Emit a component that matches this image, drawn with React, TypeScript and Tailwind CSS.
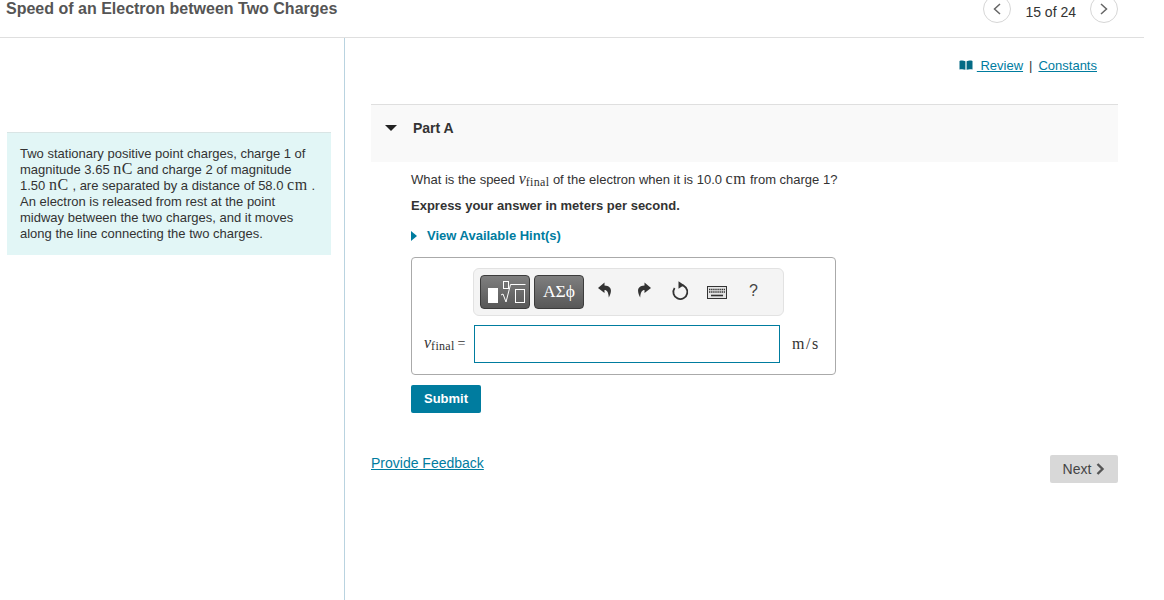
const sans = "font-['Liberation_Sans',Arial,sans-serif]";
const serif = "font-['Liberation_Serif',serif]";

function Math({ children }: { children: React.ReactNode }) {
  return <span className={`${serif} text-[16px] leading-[0] tracking-[0.6px]`}>{children}</span>;
}

function VFinal() {
  return (
    <span className={`${serif} whitespace-nowrap leading-[0]`}>
      <i className="text-[16px]">v</i>
      <span className="relative top-[2px] text-[12px] tracking-[0.3px]">final</span>
    </span>
  );
}

function Chevron({ dir }: { dir: "left" | "right" }) {
  return (
    <svg width="10" height="14" viewBox="0 0 10 14" fill="none" stroke="#666" strokeWidth="1.5">
      <path d={dir === "left" ? "M8 2 L2.5 7 L8 12" : "M2 2 L7.5 7 L2 12"} />
    </svg>
  );
}

function Toolbar() {
  return (
    <div className="ml-[61px] flex h-[48px] w-[311px] items-center rounded-[6px] border border-[#e2e2e2] bg-[#f4f4f4] pl-[6px]">
      <div className="flex h-[34px] w-[50px] items-center justify-center rounded-[4px] border border-[#3c3c3c] bg-gradient-to-b from-[#7f7f7f] to-[#585858]">
        <svg width="48" height="32" viewBox="0 0 48 32" fill="none" stroke="#fff" strokeWidth="1">
          <rect x="7" y="12" width="10" height="15" fill="#fff" stroke="none" />
          <rect x="22.5" y="5.5" width="5" height="7" />
          <path d="M20 19 L22 18 L25 26 L29.5 8.5 L44.5 8.5" />
          <rect x="34.5" y="13.5" width="9" height="13" />
        </svg>
      </div>
      <div className={`${serif} ml-[4px] flex h-[34px] w-[50px] items-center justify-center rounded-[4px] border border-[#3c3c3c] bg-gradient-to-b from-[#7f7f7f] to-[#585858] text-[17.5px] text-white`}>
        ΑΣϕ
      </div>
      <svg className="-mt-[3px] ml-[14px]" width="14" height="16" viewBox="0 0 14 16" fill="#333">
        <path d="M6.5 0.5 L0 6 L6.5 11 L6.5 8 C9 8 10.4 10 10.8 15.5 C14 10 14.4 3.8 6.5 3.5 Z" />
      </svg>
      <svg className="-mt-[3px] ml-[25px]" width="14" height="16" viewBox="0 0 14 16" fill="#333">
        <path d="M7.5 0.5 L14 6 L7.5 11 L7.5 8 C5 8 3.6 10 3.2 15.5 C0 10 -0.4 3.8 7.5 3.5 Z" />
      </svg>
      <svg className="-mt-[2px] ml-[20px]" width="18" height="20" viewBox="0 0 18 20" fill="none" stroke="#333" strokeWidth="1.8">
        <path d="M9.5 4 A7 7 0 1 1 3.6 7" />
        <path d="M7.5 0.2 L13 4 L7.5 7.8 Z" fill="#333" stroke="none" />
      </svg>
      <svg className="mt-[2px] ml-[18px]" width="20" height="13" viewBox="0 0 20 13" fill="none">
        <rect x="0.5" y="0.5" width="19" height="12" fill="#e4e4e4" stroke="#333" />
        <path d="M2 3.5 H18 M2 6 H18" stroke="#333" strokeWidth="1.3" strokeDasharray="1.4 0.7" />
        <path d="M4 9.5 H16" stroke="#333" strokeWidth="1.6" />
      </svg>
      <span className={`${sans} -mt-[2px] ml-[22px] text-[16px] text-[#444]`}>?</span>
    </div>
  );
}

export default function App() {
  return (
    <div className={`${sans} h-[600px] w-[1164px] overflow-hidden bg-white text-[13px] text-[#333]`}>
      <header className="flex h-[38px] w-[1144px] items-start justify-between border-b border-[#dfdfdf] pl-[6px] pr-[26px]">
        <h1 className="-mt-[1px] text-[16px] leading-[19px] font-bold text-[#555]">
          Speed of an Electron between Two Charges
        </h1>
        <div className="-mt-[5px] flex items-center">
          <button className="flex h-[28px] w-[28px] items-center justify-center rounded-full border border-[#d6d6d6]">
            <Chevron dir="left" />
          </button>
          <span className="mx-[14px] mt-[7px] text-[14px]">15 of 24</span>
          <button className="flex h-[28px] w-[28px] items-center justify-center rounded-full border border-[#d6d6d6]">
            <Chevron dir="right" />
          </button>
        </div>
      </header>
      <div className="flex h-[562px]">
        <aside className="w-[345px] shrink-0 border-r border-[#b9d3e0] pt-[94px] pl-[7px]">
          <div className="h-[123px] w-[324px] border-t border-[#d9e5e5] bg-[#e2f6f6] pt-[13px] pl-[13px] text-[13px] leading-[16px]">
            Two stationary positive point charges, charge 1 of
            <br />
            magnitude 3.65 <Math>nC</Math> and charge 2 of magnitude
            <br />
            1.50 <Math>nC</Math> , are separated by a distance of 58.0 <Math>cm</Math> .
            <br />
            An electron is released from rest at the point
            <br />
            midway between the two charges, and it moves
            <br />
            along the line connecting the two charges.
          </div>
        </aside>
        <main className="w-[773px] pl-[26px]">
          <div className="mt-[18px] flex justify-end pr-[21px] text-[13px]">
            <svg className="mt-[4px] mr-[4px]" width="14" height="10" viewBox="0 0 14 10" fill="#046b85">
              <path d="M0.5 1 C2 0.4 4.5 0.4 6.4 1.2 V9.8 C4.5 9 2 9 0.5 9.6 Z M7.6 1.2 C9.5 0.4 12 0.4 13.5 1 V9.6 C12 9 9.5 9 7.6 9.8 Z" />
            </svg>
            <a className="text-[#007c9f] underline">&nbsp;Review</a>
            <span className="mx-[6px]">|</span>
            <a className="text-[#007c9f] underline">Constants</a>
          </div>
          <div className="mt-[28px] flex h-[58px] border-t border-[#dfdfdf] bg-[#f9f9f9] pt-[14px] text-[14px] font-bold">
            <span className="mt-[6px] ml-[14px] h-0 w-0 border-x-[6px] border-t-[6px] border-x-transparent border-t-[#222]" />
            <span className="ml-[16px] leading-[18px]">Part A</span>
          </div>
          <div className="pl-[40px]">
            <p className="mt-[9px] text-[13px] leading-[18px]">
              What is the speed <VFinal /> of the electron when it is 10.0 <Math>cm</Math> from charge 1?
            </p>
            <p className="mt-[8px] text-[13px] leading-[18px] font-bold">Express your answer in meters per second.</p>
            <div className="mt-[12px] flex items-center text-[13px] leading-[18px] font-bold text-[#007c9f]">
              <span className="h-0 w-0 border-y-[5px] border-l-[6px] border-y-transparent border-l-[#007c9f]" />
              <span className="ml-[10px]">View Available Hint(s)</span>
            </div>
            <div className="mt-[12px] h-[118px] w-[425px] rounded-[4px] border border-[#aaa] pt-[10px]">
              <Toolbar />
              <div className="mt-[9px] flex items-center">
                <span className="ml-[12px] flex w-[50px] items-center">
                  <VFinal />
                  <span className={`${serif} ml-[3px] text-[14px]`}>=</span>
                </span>
                <div className="h-[38px] w-[306px] border border-[#007c9f] bg-white" />
                <span className={`${serif} ml-[12px] text-[16px] tracking-[1.5px]`}>m/s</span>
              </div>
            </div>
            <button className="mt-[10px] h-[28px] w-[70px] rounded-[2px] bg-[#007c9f] pt-[1px] text-[13px] font-bold text-white">
              Submit
            </button>
          </div>
          <div className="mt-[35px] flex items-start justify-between">
            <a className="mt-[6px] text-[14px] leading-[18px] text-[#007c9f] underline">Provide Feedback</a>
            <button className="mt-[7px] flex h-[28px] w-[68px] items-center justify-center rounded-[2px] bg-[#d8d8d8] pt-[1px] text-[14px] text-[#444]">
              Next
              <svg className="ml-[5px]" width="9" height="12" viewBox="0 0 9 12" fill="none" stroke="#555" strokeWidth="2.4">
                <path d="M1.5 1 L6.5 6 L1.5 11" />
              </svg>
            </button>
          </div>
        </main>
      </div>
    </div>
  );
}
